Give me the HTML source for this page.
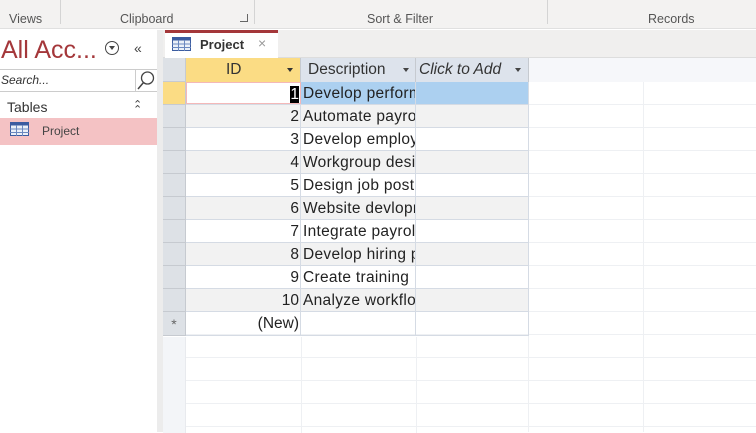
<!DOCTYPE html><html><head><style>
*{margin:0;padding:0;box-sizing:border-box}
body{width:756px;height:432px;overflow:hidden;background:#fff;font-family:"Liberation Sans",sans-serif;position:relative}
.a{position:absolute}
.rl{font-size:12.5px;color:#555;top:12px}
.vl{width:1px;background:#d4d4d4;top:0;height:24px}
.row{position:absolute;left:163px;width:366px;height:23px;border-bottom:1px solid #d5dbe4}
.sel{position:absolute;left:0;top:0;width:23px;height:23px;background:#dde1e6;border-right:1px solid #c6cad0;border-bottom:1px solid #c6cad0}
.c1{position:absolute;left:23px;width:115px;height:22px;border-right:1px solid #d5dbe4;text-align:right;padding-right:1px;font-size:15.5px;line-height:23px;color:#222}
.c2{position:absolute;left:138px;width:115px;height:22px;border-right:1px solid #d5dbe4;font-size:15.5px;line-height:23px;color:#222;padding-left:2px;overflow:hidden;white-space:nowrap;letter-spacing:0.3px}
.c3{position:absolute;left:253px;width:113px;height:22px;border-right:1px solid #d5dbe4}
</style></head><body>
<div class="a" style="left:0;top:0;width:756px;height:29px;background:#f3f2f1;border-bottom:1px solid #e0e0e0"></div>
<div class="a rl" style="left:9px">Views</div>
<div class="a rl" style="left:120px">Clipboard</div>
<div class="a" style="left:240px;top:14px;width:8px;height:8px;border:1px solid #666;border-left:none;border-top:none"></div>
<div class="a rl" style="left:367px">Sort &amp; Filter</div>
<div class="a rl" style="left:648px">Records</div>
<div class="a vl" style="left:60px"></div>
<div class="a vl" style="left:254px"></div>
<div class="a vl" style="left:547px"></div>
<!-- nav -->
<div class="a" style="left:0;top:30px;width:157px;height:402px;background:#fff"></div>
<div class="a" style="left:157px;top:30px;width:6px;height:402px;background:#ececec"></div>
<div class="a" style="left:1px;top:36px;font-size:25px;color:#a4373a">All Acc...</div>
<div class="a" style="left:105px;top:41px;width:14px;height:14px;border:1px solid #444;border-radius:50%"></div>
<div class="a" style="left:109px;top:46px;border-left:3px solid transparent;border-right:3px solid transparent;border-top:4px solid #444"></div>
<div class="a" style="left:134px;top:40px;font-size:14px;color:#444">«</div>
<div class="a" style="left:0;top:69px;width:157px;height:23px;border-top:1px solid #ccc;border-bottom:1px solid #ccc"></div>
<div class="a" style="left:1px;top:73px;font-size:12px;font-style:italic;color:#333">Search...</div>
<div class="a" style="left:135px;top:69px;width:1px;height:23px;background:#ccc"></div>
<svg class="a" style="left:136px;top:70px" width="20" height="21"><circle cx="11.5" cy="8" r="6" fill="none" stroke="#444" stroke-width="1.3"/><path d="M7.5 12.5L2 19" stroke="#444" stroke-width="1.5"/></svg>
<div class="a" style="left:7px;top:99px;font-size:14px;color:#333">Tables</div>
<div class="a" style="left:133px;top:98px;font-size:11px;color:#444">&#8963;</div>
<div class="a" style="left:133px;top:103px;font-size:11px;color:#444">&#8963;</div>
<div class="a" style="left:0;top:118px;width:157px;height:27px;background:#f4c2c4"></div>
<svg class="a" style="left:10px;top:122px" width="19" height="14"><rect x="0.5" y="0.5" width="18" height="13" fill="#eaf0f8" stroke="#3b5ca0"/><rect x="0.5" y="0.5" width="18" height="3" fill="#3b5ca0"/><path d="M0 7H19M0 10.5H19M6.5 3V14M12.5 3V14" stroke="#6a88bf"/></svg>
<div class="a" style="left:42px;top:124px;font-size:12px;color:#444">Project</div>
<!-- tab strip -->
<div class="a" style="left:163px;top:30px;width:593px;height:28px;background:#f0efee;border-bottom:1px solid #ddd"></div>
<div class="a" style="left:165px;top:30px;width:113px;height:28px;background:#fff;border-top:3px solid #a4373a"></div>
<svg class="a" style="left:172px;top:37px" width="19" height="14"><rect x="0.5" y="0.5" width="18" height="13" fill="#eaf0f8" stroke="#3b5ca0"/><rect x="0.5" y="0.5" width="18" height="3" fill="#3b5ca0"/><path d="M0 7H19M0 10.5H19M6.5 3V14M12.5 3V14" stroke="#6a88bf"/></svg>
<div class="a" style="left:200px;top:37px;font-size:13px;font-weight:bold;color:#333">Project</div>
<div class="a" style="left:258px;top:35px;font-size:14px;color:#999">×</div>
<!-- grid bg lines -->
<div class="a" style="left:163px;top:59px;width:593px;height:373px;background:repeating-linear-gradient(to bottom,#fff 0,#fff 22px,#eef0f3 22px,#eef0f3 23px)"></div>
<div class="a" style="left:163px;top:337px;width:23px;height:96px;background:#f3f5f8;border-right:1px solid #e8eaee"></div>
<div class="a" style="left:301px;top:337px;width:1px;height:96px;background:#eef0f3"></div>
<div class="a" style="left:416px;top:337px;width:1px;height:96px;background:#eef0f3"></div>
<div class="a" style="left:528px;top:58px;width:1px;height:374px;background:#eef0f3"></div>
<div class="a" style="left:643px;top:58px;width:1px;height:374px;background:#eef0f3"></div>
<div class="a" style="left:529px;top:58px;width:227px;height:24px;background:#f6f7fa"></div>
<!-- header -->
<div class="a" style="left:163px;top:58px;width:23px;height:24px;background:#dde1e6;border-right:1px solid #c6cad0;border-bottom:1px solid #c6cad0"></div>
<div class="a" style="left:186px;top:58px;width:115px;height:24px;background:#fbdc84;border-right:1px solid #c6cad0;font-size:15.5px;line-height:24px;color:#333"><span style="position:absolute;left:40px">ID</span><span style="position:absolute;right:7px;top:10px;border-left:3px solid transparent;border-right:3px solid transparent;border-top:4px solid #333"></span></div>
<div class="a" style="left:301px;top:58px;width:115px;height:24px;background:#dde3ec;border-right:1px solid #c6cad0;font-size:15.5px;line-height:24px;color:#333"><span style="position:absolute;left:7px">Description</span><span style="position:absolute;right:6px;top:10px;border-left:3px solid transparent;border-right:3px solid transparent;border-top:4px solid #444"></span></div>
<div class="a" style="left:416px;top:58px;width:113px;height:24px;background:#dde3ec;border-right:1px solid #c6cad0;font-size:15.5px;font-style:italic;line-height:24px;color:#333"><span style="position:absolute;left:3px">Click to Add</span><span style="position:absolute;right:7px;top:10px;border-left:3px solid transparent;border-right:3px solid transparent;border-top:4px solid #444"></span></div>
<!-- rows -->
<div class="row" style="top:82px"><div class="sel" style="background:#fbdc84"></div><div class="c1" style="border:1px solid #f4b8b8"><span style="background:#000;color:#fff">1</span></div><div class="c2" style="background:#acd0f0">Develop performance</div><div class="c3" style="background:#acd0f0"></div></div>
<div class="row" style="top:105px;background:#f2f2f2"><div class="sel"></div><div class="c1">2</div><div class="c2">Automate payroll</div><div class="c3"></div></div>
<div class="row" style="top:128px"><div class="sel"></div><div class="c1">3</div><div class="c2">Develop employee</div><div class="c3"></div></div>
<div class="row" style="top:151px;background:#f2f2f2"><div class="sel"></div><div class="c1">4</div><div class="c2">Workgroup design</div><div class="c3"></div></div>
<div class="row" style="top:174px"><div class="sel"></div><div class="c1">5</div><div class="c2">Design job posting</div><div class="c3"></div></div>
<div class="row" style="top:197px;background:#f2f2f2"><div class="sel"></div><div class="c1">6</div><div class="c2">Website devlopment</div><div class="c3"></div></div>
<div class="row" style="top:220px"><div class="sel"></div><div class="c1">7</div><div class="c2">Integrate payroll</div><div class="c3"></div></div>
<div class="row" style="top:243px;background:#f2f2f2"><div class="sel"></div><div class="c1">8</div><div class="c2">Develop hiring plan</div><div class="c3"></div></div>
<div class="row" style="top:266px"><div class="sel"></div><div class="c1">9</div><div class="c2">Create training</div><div class="c3"></div></div>
<div class="row" style="top:289px;background:#f2f2f2"><div class="sel"></div><div class="c1">10</div><div class="c2">Analyze workflow</div><div class="c3"></div></div>
<div class="row" style="top:312px;height:24px"><div class="sel" style="height:24px;text-align:center;font-size:14px;line-height:24px;color:#666">*</div><div class="c1" style="height:23px;line-height:24px">(New)</div><div class="c2" style="height:23px"></div><div class="c3" style="height:23px"></div></div>
</body></html>
